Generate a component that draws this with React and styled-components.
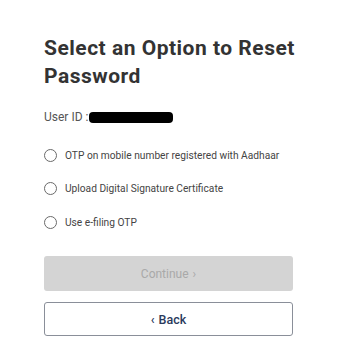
import styled, { createGlobalStyle } from "styled-components";

const Global = createGlobalStyle`
  body {
    margin: 0;
    background: #fff;
    font-family: Roboto, "Noto Sans", sans-serif;
  }
`;

const Page = styled.div`
  width: 249px;
  padding: 34px 0 0 44px;
  display: flex;
  flex-direction: column;
`;

const Title = styled.h1`
  margin: 0 -20px 0 0;
  font-size: 21px;
  line-height: 28px;
  font-weight: 700;
  letter-spacing: 0.5px;
  color: #333;
`;

const UserRow = styled.div`
  margin-top: 19px;
  display: flex;
  align-items: center;
  font-size: 12px;
  color: #555;
  height: 16px;
`;

const Redacted = styled.span`
  display: inline-block;
  width: 84px;
  height: 11px;
  margin-left: 1px;
  background: #000;
  border-radius: 4px;
`;

const Options = styled.div`
  margin-top: 23px;
  display: flex;
  flex-direction: column;
  gap: 19.5px;
`;

const Option = styled.label`
  display: flex;
  align-items: center;
  gap: 8px;
  height: 14px;
  font-size: 10.2px;
  white-space: nowrap;
  color: #444;
`;

const Radio = styled.span`
  width: 11px;
  height: 11px;
  border: 1.3px solid #6a6a6a;
  border-radius: 50%;
  flex: none;
`;

const Button = styled.button`
  width: 249px;
  height: ${(p) => (p.$primary ? "35px" : "34px")};
  border-radius: 3px;
  font-family: inherit;
  font-size: ${(p) => (p.$primary ? "12px" : "12.5px")};
  display: flex;
  align-items: center;
  justify-content: center;
  gap: 4px;
  background: ${(p) => (p.$primary ? "#d4d4d4" : "#fff")};
  color: ${(p) => (p.$primary ? "#a9a9a9" : "#2b3a5c")};
  border: ${(p) => (p.$primary ? "none" : "1px solid #8a8f99")};
  font-weight: ${(p) => (p.$primary ? 400 : 500)};
  padding: 0;
`;

const Actions = styled.div`
  margin-top: 27px;
  display: flex;
  flex-direction: column;
  gap: 11px;
`;

const options = [
  "OTP on mobile number registered with Aadhaar",
  "Upload Digital Signature Certificate",
  "Use e-filing OTP",
];

export default function App() {
  return (
    <>
      <Global />
      <Page>
        <Title>Select an Option to Reset Password</Title>
        <UserRow>
          User ID :<Redacted />
        </UserRow>
        <Options>
          {options.map((o) => (
            <Option key={o}>
              <Radio />
              {o}
            </Option>
          ))}
        </Options>
        <Actions>
          <Button $primary disabled>
            Continue <span>›</span>
          </Button>
          <Button>
            <span>‹</span> Back
          </Button>
        </Actions>
      </Page>
    </>
  );
}
